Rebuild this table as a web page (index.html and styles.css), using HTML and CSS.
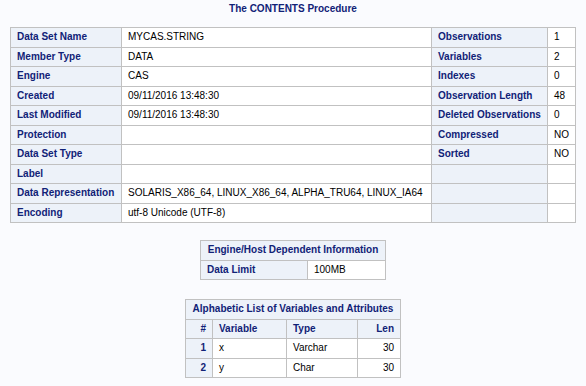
FILE: index.html
```html
<!DOCTYPE html>
<html>
<head>
<meta charset="utf-8">
<link rel="stylesheet" href="styles.css">
</head>
<body>
<div class="proctitle">The CONTENTS Procedure</div>

<table class="sas main">
  <colgroup><col class="c1"><col class="c2"><col class="c3"><col class="c4"></colgroup>
  <tr><th>Data Set Name</th><td>MYCAS.STRING</td><th>Observations</th><td>1</td></tr>
  <tr><th>Member Type</th><td>DATA</td><th>Variables</th><td>2</td></tr>
  <tr><th>Engine</th><td>CAS</td><th>Indexes</th><td>0</td></tr>
  <tr><th>Created</th><td>09/11/2016 13:48:30</td><th>Observation Length</th><td>48</td></tr>
  <tr><th>Last Modified</th><td>09/11/2016 13:48:30</td><th>Deleted Observations</th><td>0</td></tr>
  <tr><th>Protection</th><td></td><th>Compressed</th><td>NO</td></tr>
  <tr><th>Data Set Type</th><td></td><th>Sorted</th><td>NO</td></tr>
  <tr><th>Label</th><td></td><th></th><td></td></tr>
  <tr><th>Data Representation</th><td>SOLARIS_X86_64, LINUX_X86_64, ALPHA_TRU64, LINUX_IA64</td><th></th><td></td></tr>
  <tr><th>Encoding</th><td>utf-8 Unicode (UTF-8)</td><th></th><td></td></tr>
</table>

<table class="sas engine">
  <colgroup><col class="e1"><col class="e2"></colgroup>
  <tr><th colspan="2" class="center">Engine/Host Dependent Information</th></tr>
  <tr><th>Data Limit</th><td>100MB</td></tr>
</table>

<table class="sas vars">
  <colgroup><col class="v1"><col class="v2"><col class="v3"><col class="v4"></colgroup>
  <tr><th colspan="4" class="center">Alphabetic List of Variables and Attributes</th></tr>
  <tr><th class="right">#</th><th>Variable</th><th>Type</th><th class="right">Len</th></tr>
  <tr><th class="right">1</th><td>x</td><td>Varchar</td><td class="right">30</td></tr>
  <tr><th class="right">2</th><td>y</td><td>Char</td><td class="right">30</td></tr>
</table>
</body>
</html>
```

FILE: styles.css
```css
html, body {
  margin: 0;
  padding: 0;
  background: #fafbfe;
}

body {
  font-family: "Liberation Sans", Arial, Helvetica, sans-serif;
  font-size: 10px;
  color: #000000;
  padding-top: 3px;
}

.proctitle {
  text-align: center;
  font-weight: bold;
  color: #112277;
  line-height: 12px;
  margin-bottom: 12px;
}

.sas {
  border-collapse: collapse;
  table-layout: fixed;
  margin: 0 auto;
  border: 1px solid #c1c1c1;
}

.sas th,
.sas td {
  border: 1px solid #c1c1c1;
  padding: 3px 6px;
  line-height: 12.5px;
  height: 12.5px;
  text-align: left;
  white-space: nowrap;
  overflow: hidden;
  vertical-align: middle;
}

.sas th {
  background: #edf2f9;
  color: #112277;
  font-weight: bold;
}

.sas td {
  background: #ffffff;
  color: #000000;
  font-weight: normal;
}

.sas .center { text-align: center; }
.sas .right { text-align: right; }

.main { width: 566px; margin-bottom: 17px; }
.main .c1 { width: 111px; }
.main .c2 { width: 310px; }
.main .c3 { width: 116px; }
.main .c4 { width: 28px; }

.engine { width: 186px; margin-bottom: 19px; }
.engine .e1 { width: 107px; }
.engine .e2 { width: 78px; }

.vars { width: 216px; }
.vars .v1 { width: 27px; }
.vars .v2 { width: 74px; }
.vars .v3 { width: 71px; }
.vars .v4 { width: 43px; }
```
